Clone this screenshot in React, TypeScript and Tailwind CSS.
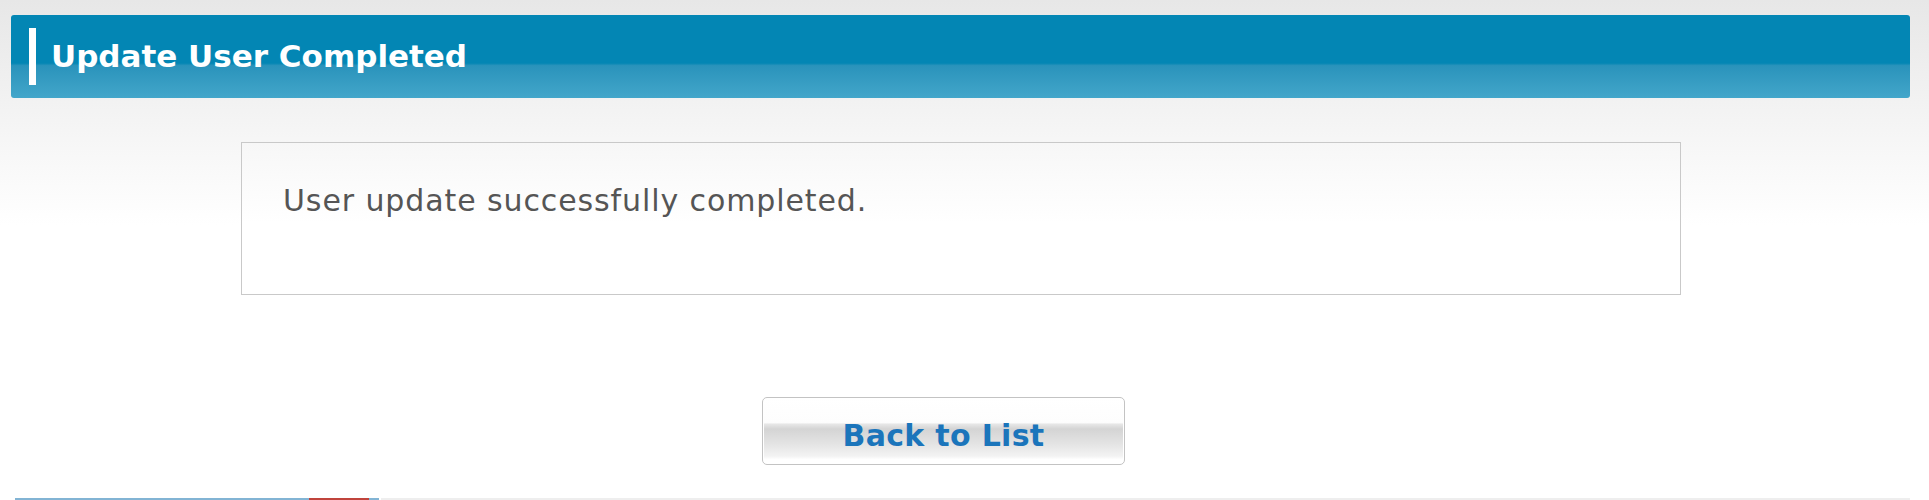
export default function App() {
  return (
    <div className="min-h-[500px] w-full bg-[linear-gradient(to_bottom,#e7e7e7_0px,#f4f4f4_120px,#ffffff_225px)] font-['DejaVu_Sans',Verdana,sans-serif] overflow-hidden">
      <div className="pl-[11px] pr-[19px] pt-[15px]">
        <div className="flex h-[83px] items-center rounded-[3px] bg-[linear-gradient(to_bottom,#0386b4_0%,#0386b4_58%,#2a93bb_61%,#43a6ca_100%)] pl-[18px]">
          <span className="h-[57px] w-[7px] bg-white" />
          <h1 className="ml-[15px] text-[31px] font-bold text-white">Update User Completed</h1>
        </div>
      </div>

      <div className="ml-[241px] mt-[44px] h-[153px] w-[1440px] border border-[#c9c9c9] bg-[linear-gradient(to_bottom,#f7f7f7_0px,#ffffff_80px)] pl-[41px] pt-[35px]">
        <p className="text-[30px] tracking-[0.9px] text-[#555555]">User update successfully completed.</p>
      </div>

      <div className="ml-[762px] mt-[102px]">
        <button className="h-[68px] w-[363px] rounded-[5px] border border-[#c3c3c3] bg-[linear-gradient(to_bottom,#ffffff_0%,#fdfdfd_37%,#e6e6e6_40%,#d4d4d4_47%,#e4e4e4_70%,#f3f3f3_88%,#ffffff_93%,#ffffff_100%)] pt-[8px] text-[30px] font-bold tracking-[0.3px] text-[#1b75bb] shadow-[inset_0_0_0_1px_#ffffff]">
          Back to List
        </button>
      </div>

      <div className="ml-[15px] mt-[33px] flex h-[2px]">
        <div className="w-[294px] bg-[#82b4d4]" />
        <div className="w-[60px] bg-[#c0443c]" />
        <div className="w-[10px] bg-[#82b4d4]" />
        <div className="ml-[2px] w-[1529px] bg-[#eeeeee]" />
      </div>
    </div>
  );
}
